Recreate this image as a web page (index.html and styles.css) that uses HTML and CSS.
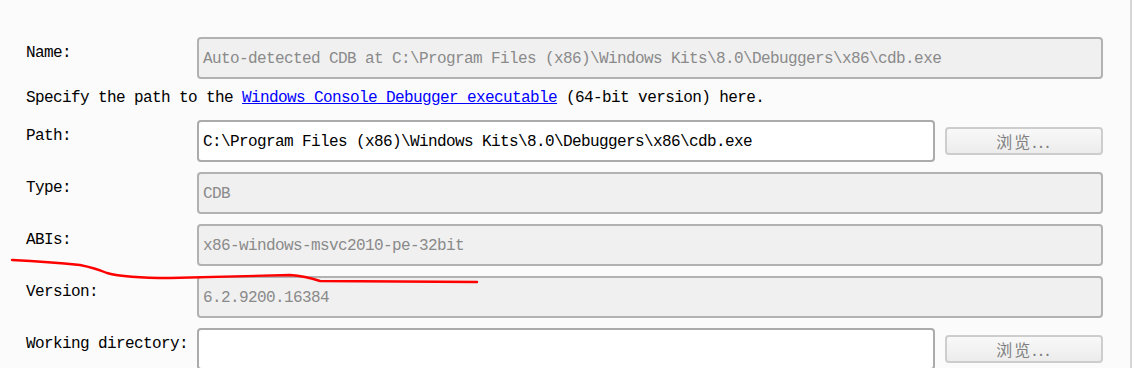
FILE: index.html
```html
<!DOCTYPE html>
<html>
<head>
<meta charset="utf-8">
<link rel="stylesheet" href="styles.css">
</head>
<body>
<div class="page">
  <div class="form">
    <div class="label">Name:</div>
    <div class="field disabled span2">Auto-detected CDB at C:\Program Files (x86)\Windows Kits\8.0\Debuggers\x86\cdb.exe</div>

    <div class="desc">Specify the path to the <a class="link" href="#">Windows Console Debugger executable</a> (64-bit version) here.</div>

    <div class="label">Path:</div>
    <div class="field">C:\Program Files (x86)\Windows Kits\8.0\Debuggers\x86\cdb.exe</div>
    <div class="btn-cell"><div class="btn">浏览...</div></div>

    <div class="label">Type:</div>
    <div class="field disabled span2">CDB</div>

    <div class="label">ABIs:</div>
    <div class="field disabled span2">x86-windows-msvc2010-pe-32bit</div>

    <div class="label">Version:</div>
    <div class="field disabled span2">6.2.9200.16384</div>

    <div class="label">Working directory:</div>
    <div class="field"></div>
    <div class="btn-cell"><div class="btn">浏览...</div></div>
  </div>
  <svg class="scribble" width="1136" height="368" viewBox="0 0 1136 368">
    <path d="M12 260 Q50 262 80 265 Q95 268 107 273 Q125 278 170 278 L290 275 Q305 276 320 281 L477 282" fill="none" stroke="#ff0000" stroke-width="2.4" stroke-linecap="round"/>
  </svg>
</div>
</body>
</html>
```
FILE: styles.css
```css
html, body {
  margin: 0;
  padding: 0;
  background: #ffffff;
  height: 368px;
  overflow: hidden;
}
.page {
  position: relative;
  width: 1130px;
  height: 368px;
  background: #fbfbfb;
  border-right: 2px solid #d6d6d6;
  font-family: "Liberation Mono", "Noto Sans CJK SC", monospace;
  font-size: 16px;
  letter-spacing: -0.6px;
  color: #000;
  overflow: hidden;
}
.form {
  display: grid;
  grid-template-columns: 171px 738px 168px;
  grid-template-rows: 42px 21px 42px 42px 42px 42px 42px;
  row-gap: 10px;
  padding: 37px 0 0 26px;
}
.label {
  padding-top: 5px;
  line-height: 22px;
  white-space: nowrap;
}
.field {
  box-sizing: border-box;
  border: 2px solid #ababab;
  border-radius: 4px;
  background: #ffffff;
  padding: 2px 4px 0;
  line-height: 36px;
  white-space: nowrap;
  overflow: hidden;
}
.field.disabled {
  background: #f0f0f0;
  border-color: #b2b2b2;
  color: #8a8a8a;
}
.span2 {
  grid-column: 2 / 4;
}
.desc {
  grid-column: 1 / 4;
  line-height: 19px;
  white-space: nowrap;
}
.link {
  color: #0000ff;
  text-decoration: underline;
}
.btn-cell {
  display: flex;
  align-items: center;
  padding-left: 10px;
}
.btn {
  box-sizing: border-box;
  width: 158px;
  height: 28px;
  border: 2px solid #cdcdcd;
  border-radius: 4px;
  background: linear-gradient(#f8f8f8, #ececec);
  color: #808080;
  font-family: "Noto Sans CJK SC", sans-serif;
  font-size: 16px;
  letter-spacing: 2px;
  display: flex;
  align-items: center;
  justify-content: center;
}
.scribble {
  position: absolute;
  left: 0;
  top: 0;
  pointer-events: none;
}
```
